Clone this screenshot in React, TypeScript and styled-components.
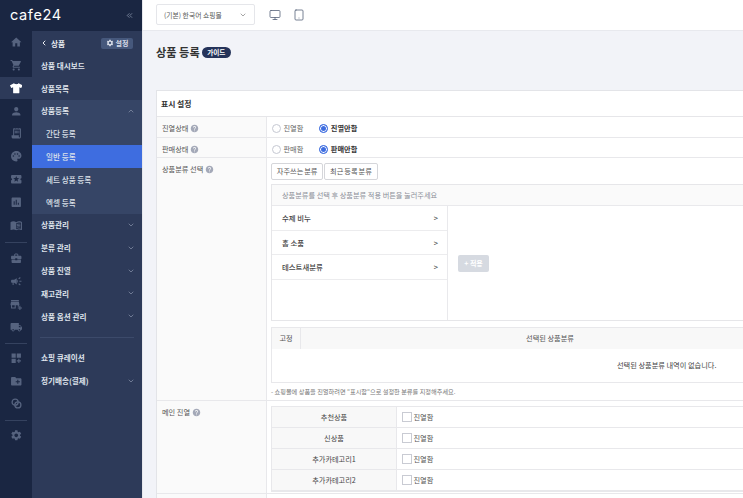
import { Fragment, ReactNode } from 'react'
import styled, { createGlobalStyle } from 'styled-components'
import { ChevronDown, ChevronUp, ChevronLeft, ChevronsLeft, Monitor, Tablet } from 'lucide-react'
import {
  MdHome, MdShoppingCart, MdPerson, MdReceiptLong, MdPalette, MdLocalActivity, MdInsertChart,
  MdMenuBook, MdBusinessCenter, MdCampaign, MdAddBusiness, MdLocalShipping,
  MdDashboardCustomize, MdCreateNewFolder, MdSettings, MdHelp,
} from 'react-icons/md'
import { FaTshirt } from 'react-icons/fa'

const Global = createGlobalStyle`
  html, body {
    margin: 0;
    height: 100%;
    overflow: hidden;
    font-family: "Noto Sans CJK KR", "Noto Sans", sans-serif;
    color: #333;
  }
  * { box-sizing: border-box; }
`

const Page = styled.div`
  display: flex;
  width: 743px;
  height: 498px;
  overflow: hidden;
  background: #f2f3f8;
`

/* sidebar */
const Sidebar = styled.aside`
  flex: 0 0 143px;
  display: flex;
  flex-direction: column;
  background: #1a2642;
  border-right: 1px solid #e6e7ec;
`
const LogoBar = styled.div`
  height: 31px;
  flex: none;
  display: flex;
  align-items: center;
  justify-content: space-between;
  padding: 0 8px 0 10px;
  color: #fff;
`
const Logo = styled.span`
  font-family: Inter, sans-serif;
  font-size: 14.6px;
  font-weight: 400;
  letter-spacing: 0.6px;
  line-height: 1;
`
const Collapse = styled.span`
  display: flex;
  color: #8e99b0;
`
const SideBody = styled.div`
  flex: 1;
  display: flex;
  min-height: 0;
`
const Rail = styled.nav`
  flex: 0 0 32px;
  display: flex;
  flex-direction: column;
`
const RailItem = styled.div<{ $active?: boolean }>`
  height: 22.8px;
  flex: none;
  display: flex;
  align-items: center;
  justify-content: center;
  font-size: 12.5px;
  color: ${p => (p.$active ? '#fff' : '#56637f')};
  background: ${p => (p.$active ? '#2d3a59' : 'transparent')};
`
const RailLine = styled.div<{ $first?: boolean }>`
  height: 1px;
  flex: none;
  margin: ${p => (p.$first ? '5.5px 5px 4.5px' : '4.5px 5px 3px')};
  background: #35425f;
`
const Panel = styled.nav`
  flex: 1;
  display: flex;
  flex-direction: column;
  background: #2d3a59;
`
const PanelHead = styled.div`
  height: 23px;
  flex: none;
  display: flex;
  align-items: center;
  justify-content: space-between;
  padding: 1px 9px 0 8px;
  font-size: 7.6px;
  font-weight: 700;
  color: #e8ebf1;
`
const Back = styled.span`
  display: flex;
  align-items: center;
  gap: 3px;
`
const SetupBtn = styled.span`
  display: flex;
  align-items: center;
  justify-content: center;
  gap: 2px;
  width: 32px;
  height: 11px;
  border-radius: 2px;
  background: #46587c;
  color: #d8dde8;
  font-size: 7px;
`
const MenuRow = styled.div<{ $active?: boolean; $child?: boolean; $open?: boolean }>`
  height: 22.8px;
  flex: none;
  display: flex;
  align-items: center;
  justify-content: space-between;
  padding: 0 7px 0 ${p => (p.$child ? '14px' : '9px')};
  font-size: 7.6px;
  font-weight: ${p => (p.$child ? 500 : 700)};
  color: #dfe3eb;
  background: ${p => (p.$active ? '#3e6de0' : p.$child || p.$open ? '#364566' : 'transparent')};
  svg { color: #8f9ab1; }
`
const MenuLine = styled.div`
  height: 1px;
  flex: none;
  margin: 9px 8px 9px 8px;
  background: #3c4a6a;
`

/* main */
const Main = styled.main`
  flex: 1;
  min-width: 0;
  overflow: hidden;
`
const Topbar = styled.header`
  width: 700px;
  height: 30px;
  display: flex;
  align-items: center;
  gap: 14px;
  padding: 0 0 1px 13px;
  background: #fff;
  box-shadow: 0 1px 0 #e8e9ee;
`
const Select = styled.div`
  width: 99px;
  height: 21px;
  display: flex;
  align-items: center;
  justify-content: space-between;
  padding: 0 7px 0 7px;
  border: 1px solid #e5e6ea;
  border-radius: 2px;
  font-size: 6.8px;
  color: #555;
  svg { color: #777; }
`
const Device = styled.span`
  display: flex;
  color: #56627a;
`
const Devices = styled.div`
  display: flex;
  align-items: center;
  gap: 12px;
`
const TopButton = styled.div`
  width: 60px;
  height: 20px;
  margin-left: auto;
  border: 1px solid #e5e6ea;
  border-radius: 2px;
`
const TitleRow = styled.div`
  height: 60px;
  display: flex;
  align-items: flex-start;
  gap: 2px;
  padding: 14px 0 0 13px;
`
const Title = styled.h1`
  margin: 0;
  font-size: 11.2px;
  line-height: 16px;
  font-weight: 700;
  color: #333;
`
const Guide = styled.span`
  margin-top: 3px;
  padding: 0 5.5px;
  height: 11px;
  border-radius: 6px;
  background: #25335a;
  color: #fff;
  font-size: 6.6px;
  font-weight: 700;
  line-height: 11px;
`
const Card = styled.section`
  width: 700px;
  margin-left: 13px;
  border: 1px solid #e3e4e8;
  border-width: 1px 0 0 1px;
  background: #fff;
`
const CardTitle = styled.h2`
  margin: 0;
  height: 26px;
  padding: 0 4px;
  font-size: 7.8px;
  font-weight: 700;
  line-height: 25px;
  color: #333;
  border-bottom: 1px solid #e6e6e9;
`
const Row = styled.div<{ $h: number }>`
  display: grid;
  grid-template-columns: 110px 1fr;
  height: ${p => p.$h}px;
  border-bottom: 1px solid #e8e8eb;
`
const Label = styled.div`
  display: flex;
  align-items: flex-start;
  gap: 2px;
  padding: 6px 0 0 5px;
  background: #fafafa;
  border-right: 1px solid #e8e8eb;
  font-size: 7.2px;
  line-height: 10px;
  color: #555;
  svg { color: #a4a9b8; margin-top: 1px; }
`
const Field = styled.div`
  padding: 5px 0 0 4px;
  min-width: 0;
`
const Radios = styled.div`
  display: flex;
  align-items: center;
  gap: 16px;
  padding: 1px 0 0 1px;
`
const Radio = styled.span<{ $on?: boolean }>`
  display: inline-flex;
  align-items: center;
  gap: 2.5px;
  font-size: 7.2px;
  line-height: 10px;
  font-weight: ${p => (p.$on ? 700 : 400)};
  color: ${p => (p.$on ? '#333' : '#666')};
  &::before {
    content: '';
    width: 7px;
    height: 7px;
    border-radius: 50%;
    border: 1px solid ${p => (p.$on ? '#3e6de0' : '#c5c8d2')};
    background: ${p => (p.$on ? '#3e6de0' : '#fff')};
    box-shadow: ${p => (p.$on ? 'inset 0 0 0 1px #fff' : 'none')};
  }
`
const Buttons = styled.div`
  display: flex;
  gap: 1px;
  margin-bottom: 4px;
`
const Btn = styled.span`
  height: 17px;
  padding: 0 4.8px;
  border: 1px solid #d5d6da;
  border-radius: 2px;
  font-size: 7.2px;
  line-height: 15px;
  word-spacing: -0.6px;
  color: #555;
  background: #fff;
`
const PickBox = styled.div`
  width: 529px;
  height: 137px;
  border: 1px solid #e6e6e9;
  display: grid;
  grid-template-columns: 176px 1fr;
  grid-template-rows: 21px 1fr;
`
const PickHint = styled.div`
  grid-column: 1 / 3;
  padding-left: 10px;
  font-size: 7.2px;
  line-height: 20px;
  color: #8a8e98;
  background: #fafafa;
  border-bottom: 1px solid #e9e9ec;
`
const CatList = styled.ul`
  margin: 0;
  padding: 0;
  list-style: none;
  border-right: 1px solid #e9e9ec;
`
const CatItem = styled.li`
  height: 24.5px;
  display: flex;
  align-items: center;
  justify-content: space-between;
  padding: 0 9px 0 10px;
  border-bottom: 1px solid #ececee;
  font-size: 7.4px;
  font-weight: 500;
  color: #444;
`
const ApplyCell = styled.div`
  display: flex;
  align-items: center;
  padding-left: 10px;
`
const Apply = styled.span`
  width: 31px;
  height: 17px;
  border-radius: 2px;
  background: #d6dae1;
  color: #fff;
  font-size: 7px;
  font-weight: 700;
  line-height: 17px;
  text-align: center;
`
const Picked = styled.div`
  width: 529px;
  margin-top: 6px;
  border: 1px solid #e8e8eb;
`
const PickedHead = styled.div`
  display: grid;
  grid-template-columns: 29px 1fr;
  height: 21px;
  background: #f8f8f8;
  font-size: 7.2px;
  line-height: 20px;
  color: #555;
  text-align: center;
  span:first-child { border-right: 1px solid #e8e8eb; }
`
const PickedEmpty = styled.div`
  height: 33px;
  padding-left: 345px;
  font-size: 7.2px;
  line-height: 32px;
  color: #444;
  white-space: nowrap;
`
const Note = styled.p`
  margin: 4px 0 0;
  font-size: 6.2px;
  line-height: 9px;
  color: #777;
  white-space: nowrap;
`
const DisplayTable = styled.div`
  width: 529px;
  border: 1px solid #e8e8eb;
  display: grid;
  grid-template-columns: 125px 1fr;
  grid-auto-rows: 21px;
`
const DisplayName = styled.div`
  display: flex;
  align-items: center;
  justify-content: center;
  background: #f8f8f8;
  border-right: 1px solid #e8e8eb;
  border-bottom: 1px solid #e8e8eb;
  font-size: 7.2px;
  color: #444;
`
const DisplayCheck = styled.label`
  display: flex;
  align-items: center;
  gap: 2px;
  padding-left: 5px;
  border-bottom: 1px solid #e8e8eb;
  font-size: 7.2px;
  color: #555;
  &::before {
    content: '';
    width: 7.5px;
    height: 7.5px;
    border: 1px solid #c9cbd3;
    background: #fff;
  }
`

const railGroups: ReactNode[][] = [
  [<MdHome />, <MdShoppingCart />, <FaTshirt />, <MdPerson />, <MdReceiptLong />, <MdPalette />, <MdLocalActivity />, <MdInsertChart />, <MdMenuBook />],
  [<MdBusinessCenter />, <MdCampaign />, <MdAddBusiness />, <MdLocalShipping />],
  [
    <MdDashboardCustomize />,
    <MdCreateNewFolder />,
    <svg width="11" height="11" viewBox="0 0 12 12" fill="none" stroke="currentColor" strokeWidth="1.4">
      <circle cx="4.5" cy="4.5" r="3.3" />
      <circle cx="7.5" cy="7.5" r="3.3" />
    </svg>,
  ],
  [<MdSettings />],
]

const Help = () => <MdHelp size={9} />
const Down = () => <ChevronDown size={8} strokeWidth={2} />

const displayRows = ['추천상품', '신상품', '추가카테고리1', '추가카테고리2']

export default function App() {
  return (
    <Page>
      <Global />
      <Sidebar>
        <LogoBar>
          <Logo>cafe24</Logo>
          <Collapse><ChevronsLeft size={9} strokeWidth={2} /></Collapse>
        </LogoBar>
        <SideBody>
          <Rail>
            {railGroups.map((group, g) => (
              <div key={g}>
                {g > 0 && <RailLine $first={g === 1} />}
                {group.map((icon, i) => (
                  <RailItem key={i} $active={g === 0 && i === 2}>{icon}</RailItem>
                ))}
              </div>
            ))}
          </Rail>
          <Panel>
            <PanelHead>
              <Back><ChevronLeft size={8} strokeWidth={3} />상품</Back>
              <SetupBtn><MdSettings size={8} />설정</SetupBtn>
            </PanelHead>
            <MenuRow>상품 대시보드</MenuRow>
            <MenuRow>상품목록</MenuRow>
            <MenuRow $open>상품등록<ChevronUp size={8} strokeWidth={2} /></MenuRow>
            <MenuRow $child>간단 등록</MenuRow>
            <MenuRow $child $active>일반 등록</MenuRow>
            <MenuRow $child>세트 상품 등록</MenuRow>
            <MenuRow $child>엑셀 등록</MenuRow>
            <MenuRow>상품관리<Down /></MenuRow>
            <MenuRow>분류 관리<Down /></MenuRow>
            <MenuRow>상품 진열<Down /></MenuRow>
            <MenuRow>재고관리<Down /></MenuRow>
            <MenuRow>상품 옵션 관리<Down /></MenuRow>
            <MenuLine />
            <MenuRow>쇼핑 큐레이션</MenuRow>
            <MenuRow>정기배송(결제)<Down /></MenuRow>
          </Panel>
        </SideBody>
      </Sidebar>
      <Main>
        <Topbar>
          <Select>(기본) 한국어 쇼핑몰<Down /></Select>
          <Devices>
            <Device><Monitor size={12} strokeWidth={1.6} /></Device>
            <Device><Tablet size={12} strokeWidth={1.6} /></Device>
          </Devices>
          <TopButton />
        </Topbar>
        <TitleRow>
          <Title>상품 등록</Title>
          <Guide>가이드</Guide>
        </TitleRow>
        <Card>
          <CardTitle>표시 설정</CardTitle>
          <Row $h={21}>
            <Label>진열상태 <Help /></Label>
            <Field>
              <Radios>
                <Radio>진열함</Radio>
                <Radio $on>진열안함</Radio>
              </Radios>
            </Field>
          </Row>
          <Row $h={20}>
            <Label>판매상태 <Help /></Label>
            <Field>
              <Radios>
                <Radio>판매함</Radio>
                <Radio $on>판매안함</Radio>
              </Radios>
            </Field>
          </Row>
          <Row $h={243}>
            <Label>상품분류 선택 <Help /></Label>
            <Field>
              <Buttons>
                <Btn>자주쓰는 분류</Btn>
                <Btn>최근 등록 분류</Btn>
              </Buttons>
              <PickBox>
                <PickHint>상품분류를 선택 후 상품분류 적용 버튼을 눌러주세요</PickHint>
                <CatList>
                  <CatItem>수제 비누<span>&gt;</span></CatItem>
                  <CatItem>홈 소품<span>&gt;</span></CatItem>
                  <CatItem>테스트새분류<span>&gt;</span></CatItem>
                </CatList>
                <ApplyCell><Apply>+ 적용</Apply></ApplyCell>
              </PickBox>
              <Picked>
                <PickedHead><span>고정</span><span>선택된 상품분류</span></PickedHead>
                <PickedEmpty>선택된 상품분류 내역이 없습니다.</PickedEmpty>
              </Picked>
              <Note>- 쇼핑몰에 상품을 진열하려면 "표시함"으로 설정한 분류를 지정해주세요.</Note>
            </Field>
          </Row>
          <Row $h={93}>
            <Label>메인 진열 <Help /></Label>
            <Field>
              <DisplayTable>
                {displayRows.map(name => (
                  <Fragment key={name}>
                    <DisplayName>{name}</DisplayName>
                    <DisplayCheck>진열함</DisplayCheck>
                  </Fragment>
                ))}
              </DisplayTable>
            </Field>
          </Row>
          <Row $h={20}>
            <Label />
            <Field />
          </Row>
        </Card>
      </Main>
    </Page>
  )
}
